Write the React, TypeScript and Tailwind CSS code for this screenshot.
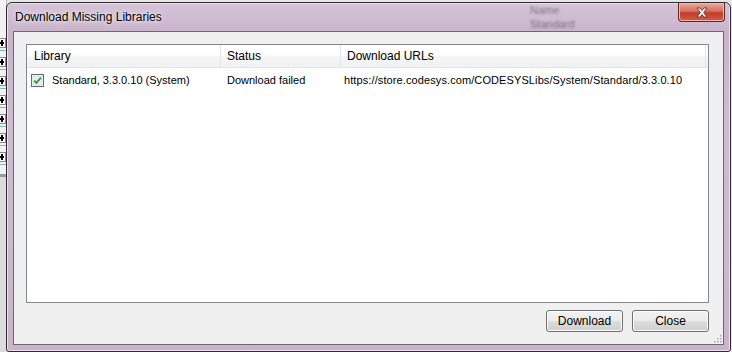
import React from "react";

const FONT = { fontFamily: '"Liberation Sans", Arial, sans-serif' };

function CheckBox() {
  return (
    <svg width="13" height="13" viewBox="0 0 13 13" className="shrink-0">
      <rect x="0.5" y="0.5" width="12" height="12" fill="#f4f6f8" stroke="#5a6e80" />
      <rect x="2" y="2" width="9" height="9" fill="#e9edf1" stroke="#c9d3dc" strokeWidth="0.6" />
      <path d="M3.2 6.6 L5.4 8.9 L9.9 3.6" fill="none" stroke="#3b9a2e" strokeWidth="1.9" />
    </svg>
  );
}

function Grip() {
  return (
    <svg width="10" height="10" viewBox="0 0 10 10">
      {[
        [8, 2],
        [8, 5],
        [5, 5],
        [8, 8],
        [5, 8],
        [2, 8],
      ].map(([x, y]) => (
        <rect key={`${x}-${y}`} x={x} y={y} width="1.5" height="1.5" fill="#a8a8a8" />
      ))}
    </svg>
  );
}

function LeftStrip() {
  // Rest des Hintergrundfensters (Baumansicht) am linken Rand
  const rows = [43, 62, 81, 100, 119, 138, 157];
  return (
    <div className="absolute left-0 top-0 w-[7px] h-[352px] bg-[#dcdcdc]">
      <div className="absolute left-0 top-0 w-[7px] h-[174px] bg-[#f2f2f2] border-r border-[#b8b8b8]" />
      {rows.map((y) => (
        <div key={y} className="absolute left-0 flex" style={{ top: y - 5 }}>
          <div className="relative w-[6px] h-[10px] bg-white border border-l-0 border-[#888]">
            <div className="absolute left-0 top-[3px] w-[4px] h-[2px] bg-black" />
            <div className="absolute left-[1px] top-[1px] w-[2px] h-[6px] bg-black" />
          </div>
        </div>
      ))}
      {rows.map((y) => (
        <div
          key={`t${y}`}
          className="absolute left-0 w-[6px] h-[1px] bg-[#7fb8c0]"
          style={{ top: y + 7 }}
        />
      ))}
      <div className="absolute left-0 top-[174px] w-[7px] h-[3px] bg-[#9a9a9a]" />
    </div>
  );
}

function Button({ label }: { label: string }) {
  return (
    <button
      type="button"
      className="w-[77px] h-[22px] rounded-[3px] border border-[#707070] text-[12px] text-black bg-[linear-gradient(#f2f2f2_0%,#ebebeb_50%,#dddddd_51%,#cfcfcf_100%)] shadow-[inset_0_0_0_1px_#fcfcfc]"
      style={FONT}
    >
      {label}
    </button>
  );
}

export default function App() {
  return (
    <div className="relative w-[732px] h-[352px] overflow-hidden bg-[#e6e6e6]" style={FONT}>
      <LeftStrip />

      {/* Fenster */}
      <div className="absolute left-[6px] top-[2px] w-[725px] h-[350px] rounded-t-[6px] rounded-b-[3px] border border-[#2e2a30] bg-[linear-gradient(#d6c4d9,#c8b3cb_30px,#cebbd1_120px,#c9b4cc)] shadow-[inset_0_0_0_1px_#ece2ee] flex flex-col">
        {/* durchscheinender Text hinter dem Rahmen */}
        <div className="absolute left-[523px] top-[0px] text-left text-[11px] text-[#5a4c5c] blur-[1.2px] leading-[14px] opacity-70">
          <div>Name</div>
          <div>Standard</div>
        </div>

        {/* Titelleiste */}
        <div className="relative h-[28px] shrink-0 flex items-center pl-[8px]">
          <span className="text-[12px] text-black [text-shadow:0_0_6px_#f4eef5,0_0_3px_#f4eef5]">
            Download Missing Libraries
          </span>
          <div className="absolute right-[5px] top-0 w-[47px] h-[19px] rounded-b-[4px] border border-t-0 border-[#5c2a22] bg-[linear-gradient(#ecaa9c,#d7705f_45%,#c53b27_55%,#d25d47)] shadow-[inset_0_0_0_1px_#f0b8aa] flex items-center justify-center">
            <svg width="14" height="11" viewBox="0 0 14 11">
              <path
                d="M2 1 L5 1 L7 3.5 L9 1 L12 1 L8.6 5.5 L12 10 L9 10 L7 7.5 L5 10 L2 10 L5.4 5.5 Z"
                fill="#ffffff"
                stroke="#4a2a26"
                strokeWidth="0.8"
              />
            </svg>
          </div>
        </div>

        {/* Client-Bereich */}
        <div className="relative mx-[6px] mb-[6px] flex-1 bg-[#f0f0f0] border border-[#6f6672] flex flex-col pl-[12px] pr-[14px] pt-[12px]">
          <div className="h-[259px] border border-[#828790] bg-white flex flex-col">
            <div className="h-[23px] flex text-[12px] text-black bg-[linear-gradient(#ffffff_0%,#ffffff_45%,#f4f4f5_55%,#f1f2f3_100%)] border-b border-[#e2e3e5]">
              <div className="w-[194px] pl-[7px] flex items-center border-r border-[#e3e4e6]">Library</div>
              <div className="w-[120px] pl-[6px] flex items-center border-r border-[#e3e4e6]">Status</div>
              <div className="w-[365px] pl-[6px] flex items-center border-r border-[#e3e4e6]">Download URLs</div>
              <div className="flex-1" />
            </div>
            <div className="h-[24px] flex items-center text-[11px] text-black">
              <div className="w-[195px] pl-[4px] flex items-center gap-[8px]">
                <CheckBox />
                <span>Standard, 3.3.0.10 (System)</span>
              </div>
              <div className="w-[120px] pl-[5px]">Download failed</div>
              <div className="pl-[2px] whitespace-nowrap tracking-[0.1px]">
                https://store.codesys.com/CODESYSLibs/System/Standard/3.3.0.10
              </div>
            </div>
          </div>

          <div className="flex justify-end gap-[9px] mt-[7px]">
            <Button label="Download" />
            <Button label="Close" />
          </div>

          <div className="absolute right-[1px] bottom-[1px]">
            <Grip />
          </div>
        </div>
      </div>
    </div>
  );
}
